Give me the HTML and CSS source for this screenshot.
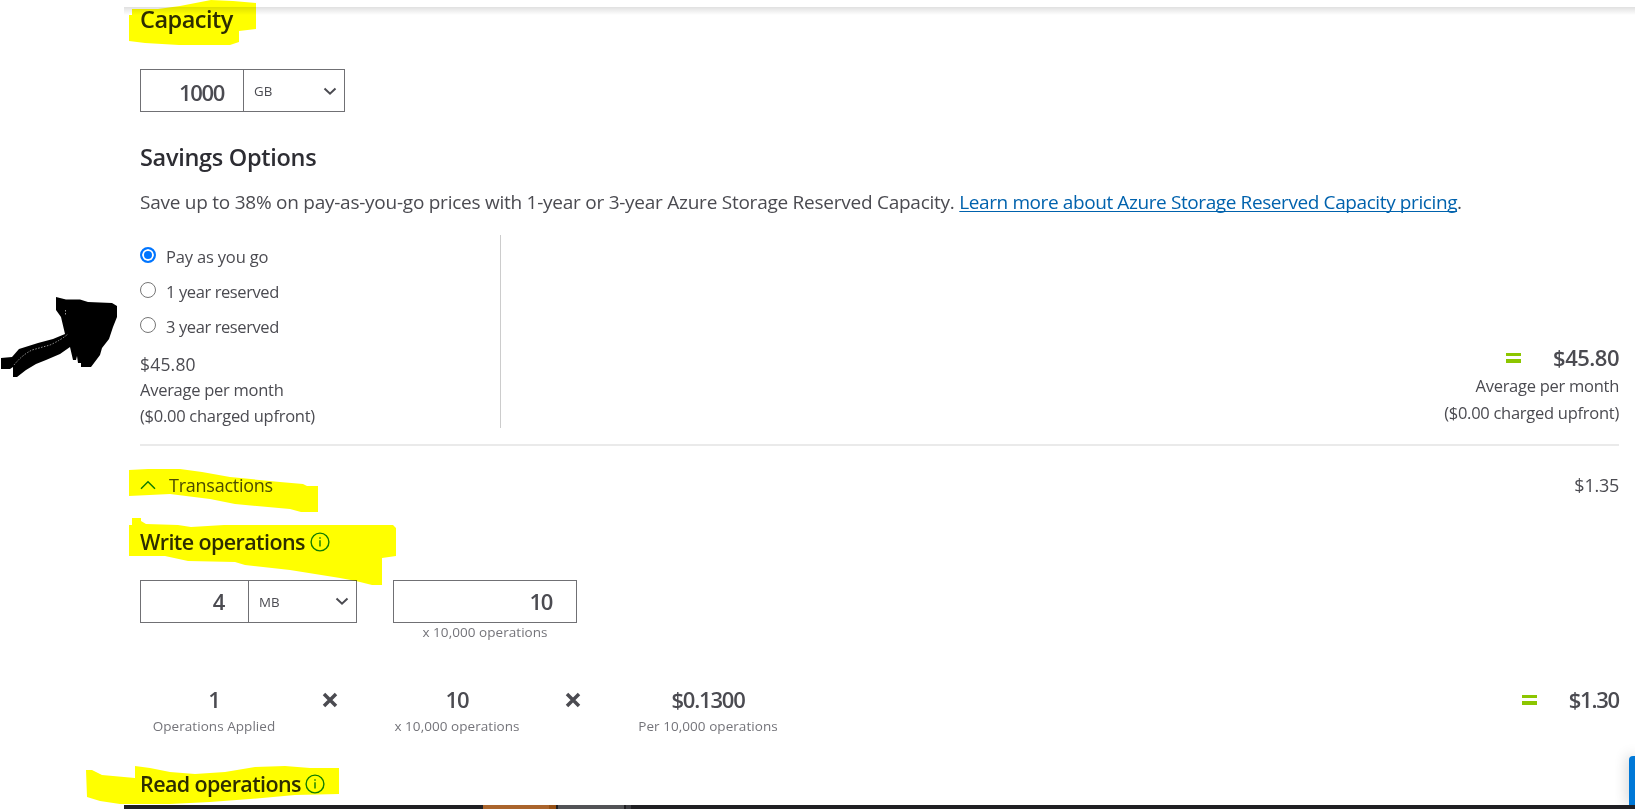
FILE: index.html
```html
<!DOCTYPE html>
<html lang="en">
<head>
    <meta charset="UTF-8">
    <meta name="viewport" content="width=device-width, initial-scale=1.0">
    <title>Storage Pricing Calculator</title>
    <link rel="stylesheet" href="styles.css">
</head>
<body>
    <div class="page">
        <div class="calculator">
            <h2 class="capacity-title">Capacity</h2>
            <div class="input-group capacity-group">
                <div class="number-box">1000</div>
                <div class="select-box">
                    <span>GB</span>
                    <svg class="arrow" viewBox="0 0 14 9"><path d="M1.5 1.5 L7 6.7 L12.5 1.5"/></svg>
                </div>
            </div>

            <h2 class="savings-title">Savings Options</h2>
            <p class="savings-text">Save up to 38% on pay-as-you-go prices with 1-year or 3-year Azure Storage Reserved Capacity. <a href="#">Learn more about Azure Storage Reserved Capacity pricing</a>.</p>

            <div class="savings">
                <div class="plans">
                    <label class="plan"><span class="radio checked"></span><span class="plan-name">Pay as you go</span></label>
                    <label class="plan reserved"><span class="radio"></span><span class="plan-name">1 year reserved</span></label>
                    <label class="plan reserved"><span class="radio"></span><span class="plan-name">3 year reserved</span></label>
                    <div class="plan-price">
                        <div class="amount">$45.80</div>
                        <div class="average">Average per month</div>
                        <div class="upfront">($0.00 charged upfront)</div>
                    </div>
                </div>
                <div class="savings-total">
                    <div class="total"><span class="equals"></span><span class="value">$45.80</span></div>
                    <div class="average">Average per month</div>
                    <div class="upfront">($0.00 charged upfront)</div>
                </div>
            </div>

            <div class="section-header">
                <svg class="collapse" viewBox="0 0 16 10"><path d="M1 8.7 L8 1.7 L15 8.7"/></svg>
                <span class="section-name">Transactions</span>
                <span class="section-price">$1.35</span>
            </div>

            <h3 class="write-title"><span>Write operations</span>
                <svg class="info" viewBox="0 0 20 20"><circle cx="10" cy="10" r="8.9"/><path d="M10 8.3 V14.6 M10 5.2 V6.8"/></svg>
            </h3>
            <div class="inputs">
                <div class="input-group size-group">
                    <div class="number-box">4</div>
                    <div class="select-box">
                        <span>MB</span>
                        <svg class="arrow" viewBox="0 0 14 9"><path d="M1.5 1.5 L7 6.7 L12.5 1.5"/></svg>
                    </div>
                </div>
                <div class="count">
                    <div class="input-group">
                        <div class="number-box">10</div>
                    </div>
                    <div class="caption">x 10,000 operations</div>
                </div>
            </div>

            <div class="formula">
                <div class="factor">
                    <div class="value">1</div>
                    <div class="caption">Operations Applied</div>
                </div>
                <svg class="times" viewBox="0 0 16 16"><path d="M2 2 L14 14 M14 2 L2 14"/></svg>
                <div class="factor">
                    <div class="value">10</div>
                    <div class="caption">x 10,000 operations</div>
                </div>
                <svg class="times" viewBox="0 0 16 16"><path d="M2 2 L14 14 M14 2 L2 14"/></svg>
                <div class="factor price">
                    <div class="value">$0.1300</div>
                    <div class="caption">Per 10,000 operations</div>
                </div>
                <div class="total"><span class="equals"></span><span class="value">$1.30</span></div>
            </div>

            <h3 class="read-title"><span>Read operations</span>
                <svg class="info" viewBox="0 0 20 20"><circle cx="10" cy="10" r="8.9"/><path d="M10 8.3 V14.6 M10 5.2 V6.8"/></svg>
            </h3>
        </div>

        <div class="top-shadow"></div>
        <div class="chat-tab"></div>
        <div class="taskbar">
            <span class="task-orange"></span>
            <span class="task-grey"></span>
            <span class="task-end"></span>
        </div>

        <!-- marker strokes -->
        <svg class="highlights" viewBox="0 0 1635 809">
            <path d="M132 9 L158 9 L180 6 L211 0 L233 1 L256 3 V29 L239 31 V42 L230 45 H179 L145 43 L129 41 V15 H132 Z"/>
            <path d="M129 470 L148 469 L180 469 L202 472 L230 477 L280 482 L303 484 L307 486 H318 V512 H301 L290 509 L235 504 L210 499 L170 494 L129 496 Z"/>
            <path d="M132 518 H141 V521 L146 524 L178 525 L191 527 L224 525 H393 L396 528 V556 L382 558 V585 H372 L356 581 L340 578 L290 570 L245 565 L235 562 L188 561 L165 556 L129 556 V525 H132 Z"/>
            <path d="M86 770 H92 L102 775 L135 778 V766 L150 768 L170 772 L195 774 L225 772 L255 767 L285 766 L310 768 H339 V794 L295 795 L250 799 L210 802 L170 804 L120 804 L100 801 L87 797 Z"/>
        </svg>

        <svg class="pointer" viewBox="0 0 1635 809">
            <path d="M56 297 L66 299.500 L80 299.500 L88 302 L112 303 L117 306 V317 L113 327 L109 339 L102 348 L100 355 L91 367 H81 V363 H78 L77 356 L76 360 H73 L70 347 L60 354 L46 360 L36 364 L26 370 L17 377 H13 V367 L10 369 H1 V358 L12 357 L19 349 L38 343 L53 339 L65 334 L61 317 L56 310 Z"/>
            <path class="scratch" d="M14 365 Q22 355 32 350 L50 345 Q61 340 68 334 M65.500 310 V315"/>
        </svg>
    </div>
</body>
</html>
```
FILE: styles.css
```css
body {
    font-family: "Open Sans", "Noto Sans", sans-serif;
    margin: 0;
    padding: 0;
    background-color: #fff;
    color: #4b4b51;
}

h2, h3, p {
    margin: 0;
}

svg {
    display: block;
    flex-shrink: 0;
    fill: none;
}

.page {
    position: relative;
    height: 809px;
    overflow: hidden;
}

.calculator {
    margin-left: 140px;
    margin-right: 16px;
    padding-top: 3px;
}

h2 {
    font-size: 23.500px;
    line-height: 32px;
    font-weight: 600;
    letter-spacing: -0.300px;
    color: #2d2d33;
}

h3 {
    display: flex;
    align-items: center;
    font-size: 21.500px;
    line-height: 30px;
    font-weight: 600;
    letter-spacing: -0.600px;
    color: #2d2d33;
}

.capacity-title {
    letter-spacing: -0.500px;
}

.input-group {
    display: flex;
    box-sizing: border-box;
    height: 43px;
    border: 1px solid #707074;
}

.number-box {
    flex: 1;
    padding-right: 19px;
    text-align: right;
    font-size: 22px;
    line-height: 40px;
    font-weight: 600;
    letter-spacing: -1.300px;
}

.select-box {
    display: flex;
    align-items: center;
    justify-content: space-between;
    box-sizing: border-box;
    border-left: 1px solid #707074;
    padding: 0 7px 0 10px;
    font-size: 13.300px;
}

.arrow {
    width: 14px;
    height: 9px;
    stroke: #4b4b51;
    stroke-width: 2;
}

.capacity-group {
    width: 205px;
    margin-top: 34px;
}

.capacity-group .number-box {
    line-height: 45px;
}

.capacity-group .select-box {
    width: 101px;
    padding-top: 1px;
}

.savings-title {
    margin-top: 29px;
}

.savings-text {
    margin-top: 14px;
    font-size: 19px;
    line-height: 30px;
    letter-spacing: -0.250px;
    white-space: nowrap;
}

.savings-text a {
    color: #0062ad;
    letter-spacing: -0.400px;
    text-decoration: underline;
    text-underline-offset: 2px;
    text-decoration-thickness: 1px;
    text-decoration-skip-ink: none;
}

.savings {
    display: flex;
    justify-content: space-between;
    height: 193px;
    margin-top: 18px;
    padding-bottom: 16px;
    border-bottom: 2px solid #eaeaea;
    font-size: 16.500px;
    letter-spacing: -0.270px;
}

.plans {
    box-sizing: border-box;
    width: 361px;
    padding-top: 4px;
    border-right: 1px solid #ccc;
}

.plan {
    display: flex;
    height: 35px;
    line-height: 35px;
    font-size: 16.500px;
    letter-spacing: -0.170px;
}

.reserved {
    letter-spacing: -0.400px;
}

.radio {
    box-sizing: border-box;
    width: 16px;
    height: 16px;
    margin: 8px 10px 0 0;
    border: 1px solid #767676;
    border-radius: 50%;
}

.radio.checked {
    border: 2px solid #0075ff;
    background-color: #0075ff;
    box-shadow: inset 0 0 0 2px #fff;
}

.plan-price {
    padding-top: 8px;
    line-height: 25.700px;
}

.amount {
    font-size: 17.500px;
    line-height: 25px;
    letter-spacing: 0.200px;
}

.savings-total {
    display: flex;
    flex-direction: column;
    align-items: flex-end;
    justify-content: flex-end;
    padding-bottom: 2px;
    line-height: 27px;
}

.value {
    font-size: 22px;
    line-height: 30px;
    font-weight: 600;
    letter-spacing: -1.200px;
}

.total {
    display: flex;
    align-items: center;
    height: 30px;
}

.savings-total .value {
    letter-spacing: -0.500px;
}

.equals {
    box-sizing: border-box;
    width: 15px;
    height: 10px;
    margin: 2px 32px 0 0;
    border-top: 3px solid #8cc600;
    border-bottom: 4px solid #8cc600;
}

.section-header {
    display: flex;
    align-items: center;
    height: 32px;
    margin-top: 23px;
    font-size: 18px;
    line-height: 32px;
    letter-spacing: -0.250px;
}

.collapse {
    width: 16px;
    height: 10px;
    margin-right: 13px;
    stroke: #107c10;
    stroke-width: 1.500;
}

.section-price {
    margin-left: auto;
}

.write-title {
    margin-top: 26px;
}

.info {
    width: 20px;
    height: 20px;
    margin-left: 5px;
    stroke: #107c10;
    stroke-width: 1.400;
}

.inputs {
    display: flex;
    gap: 36px;
    margin-top: 23px;
}

.size-group {
    width: 217px;
}

.size-group .number-box {
    padding-right: 24px;
}

.size-group .select-box {
    width: 108px;
}

.count {
    width: 184px;
}

.count .number-box {
    padding-right: 24px;
}

.caption {
    font-size: 13.500px;
    line-height: 18px;
    letter-spacing: 0.050px;
    text-align: center;
    color: #74747a;
    white-space: nowrap;
}

.formula {
    display: flex;
    height: 52px;
    margin-top: 43px;
}

.factor {
    width: 148px;
    text-align: center;
}

.factor .caption {
    margin-top: 2px;
    line-height: 20px;
}

.price {
    margin-left: 8px;
}

.times {
    width: 16px;
    height: 16px;
    margin: 8px 45px 0 34px;
    stroke: #4b4b51;
    stroke-width: 3.500;
}

.formula .total {
    margin-left: auto;
}

.read-title {
    margin-top: 33px;
}

.read-title .info {
    margin-left: 4px;
}

.top-shadow {
    position: absolute;
    top: 7px;
    left: 124px;
    right: 0;
    height: 8px;
    background: linear-gradient(rgba(0, 0, 0, 0.12), rgba(0, 0, 0, 0));
}

.chat-tab {
    position: absolute;
    top: 756px;
    right: 0;
    width: 6px;
    height: 49px;
    border-radius: 4px 0 0 0;
    background-color: #0078d7;
    box-shadow: 0 0 14px rgba(0, 0, 0, 0.3);
}

.taskbar {
    position: absolute;
    top: 805px;
    left: 124px;
    right: 0;
    height: 4px;
    display: flex;
    background-color: #1f1f23;
}

.task-orange {
    box-sizing: border-box;
    width: 73px;
    margin-left: 359px;
    border-right: 7px solid #955014;
    background-color: #aa642c;
}

.task-grey {
    width: 66px;
    margin-left: 2px;
    background-color: #525356;
}

.task-end {
    width: 5px;
    margin-left: 2px;
    background-color: #3c3d41;
}

.highlights, .pointer {
    position: absolute;
    top: 0;
    left: 0;
    width: 1635px;
    height: 809px;
}

.highlights {
    fill: #ff0;
    mix-blend-mode: multiply;
}

.pointer {
    fill: #000;
}

.scratch {
    fill: none;
    stroke: #bbb;
    stroke-width: 0.800;
    stroke-dasharray: 1.500 1.500;
}
```
